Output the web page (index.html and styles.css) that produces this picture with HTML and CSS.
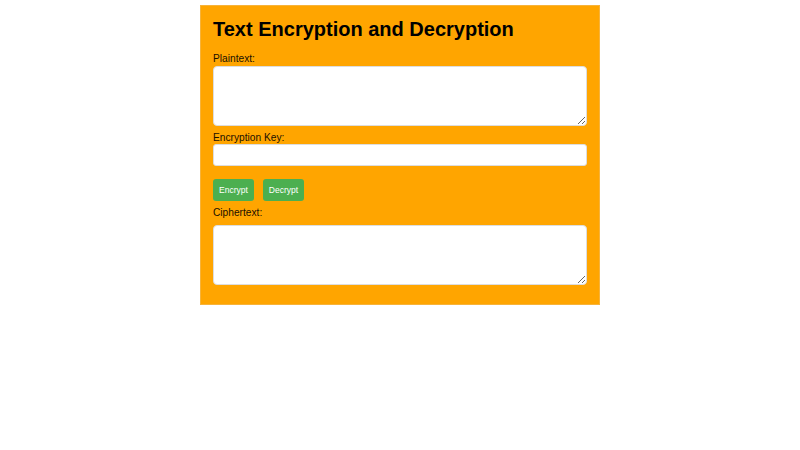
FILE: index.html
```html
<!DOCTYPE html>
<html>
<head>
<meta charset="utf-8">
<title>Text Encryption and Decryption</title>
<link rel="stylesheet" href="styles.css">
</head>
<body>
<div class="container">
  <h1 class="title">Text Encryption and Decryption</h1>
  <label class="lbl lbl-first" for="plain">Plaintext:</label>
  <textarea id="plain" class="area area-first"></textarea>
  <label class="lbl lbl-key" for="key">Encryption Key:</label>
  <input id="key" class="key" type="text">
  <div class="actions">
    <button class="btn">Encrypt</button>
    <button class="btn">Decrypt</button>
  </div>
  <label class="lbl lbl-cipher" for="cipher">Ciphertext:</label>
  <textarea id="cipher" class="area area-last"></textarea>
</div>
</body>
</html>
```

FILE: styles.css
```css
html, body {
  margin: 0;
  padding: 0;
  background: #ffffff;
  font-family: "Liberation Sans", Arial, sans-serif;
}

.container {
  width: 374px;
  margin: 5px auto 0;
  padding: 12px;
  background: #ffa500;
  border: 1px solid #f7b33a;
}

.title {
  margin: 0 0 12px;
  font-size: 20px;
  line-height: 23px;
  font-weight: bold;
  color: #000;
}

.lbl {
  display: block;
  font-size: 10.2px;
  line-height: 12px;
  color: #1a1000;
}

.area {
  display: block;
  box-sizing: border-box;
  width: 374px;
  height: 60px;
  margin: 1px 0 6px;
  border: 1px solid #dddddd;
  border-radius: 4px;
  background: #fff;
  resize: both;
}

.area-last {
  margin: 6px 0 7px;
}

.key {
  display: block;
  box-sizing: border-box;
  width: 374px;
  height: 22px;
  margin: 0;
  border: 1px solid #dddddd;
  border-radius: 3px;
  background: #fff;
  padding: 0 4px;
}

.actions {
  display: flex;
  gap: 9px;
  margin-top: 13px;
}

.btn {
  box-sizing: border-box;
  height: 22px;
  padding: 0 6px;
  font-family: "Liberation Sans", Arial, sans-serif;
  font-size: 8.5px;
  color: #ffffff;
  background: #4caf50;
  border: none;
  border-radius: 3px;
}

.lbl-cipher {
  margin-top: 6px;
}
```
